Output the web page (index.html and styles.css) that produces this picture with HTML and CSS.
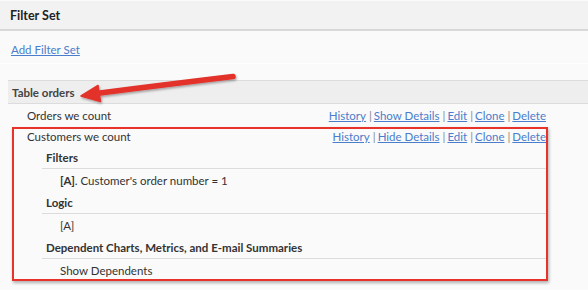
FILE: index.html
```html
<!DOCTYPE html>
<html>
<head>
<meta charset="utf-8">
<link rel="stylesheet" href="styles.css">
</head>
<body>
<div class="page">
  <div class="header">Filter Set</div>
  <div class="add"><a href="#">Add Filter Set</a></div>
  <div class="section">
    <div class="table-head">Table orders</div>
    <div class="row">
      <span class="name">Orders we count</span>
      <span class="links"><a href="#">History</a><i>|</i><a href="#">Show Details</a><i>|</i><a href="#">Edit</a><i>|</i><a href="#">Clone</a><i>|</i><a href="#">Delete</a></span>
    </div>
    <div class="row row2">
      <span class="name">Customers we count</span>
      <span class="links"><a href="#">History</a><i>|</i><a href="#">Hide Details</a><i>|</i><a href="#">Edit</a><i>|</i><a href="#">Clone</a><i>|</i><a href="#">Delete</a></span>
    </div>
    <div class="details">
      <div class="dh">Filters</div>
      <div class="di"><b>[A]</b>. Customer's order number = 1</div>
      <div class="dh">Logic</div>
      <div class="di">[A]</div>
      <div class="dh">Dependent Charts, Metrics, and E-mail Summaries</div>
      <div class="di">Show Dependents</div>
    </div>
  </div>
  <div class="redbox"></div>
  <svg class="arrow" width="588" height="290" viewBox="0 0 588 290">
    <defs>
      <filter id="sh" x="-10%" y="-50%" width="120%" height="200%">
        <feDropShadow dx="1" dy="1.5" stdDeviation="1" flood-color="#000" flood-opacity="0.35"/>
      </filter>
    </defs>
    <g filter="url(#sh)">
      <path d="M233 76.5 Q170 84 96 93.5" stroke="#e3312a" stroke-width="5.5" stroke-linecap="round" fill="none"/>
      <path d="M81 96 L98 85.5 L100.5 101.5 Z" fill="#e3312a" stroke="#e3312a" stroke-width="1.5" stroke-linejoin="round"/>
    </g>
  </svg>
</div>
</body>
</html>
```

FILE: styles.css
```css
* { box-sizing: border-box; }
html, body { margin: 0; padding: 0; }
body {
  background: #fafafa;
  font-family: "Lato", "Open Sans", sans-serif;
  font-size: 11.5px;
  color: #333;
  width: 588px;
  height: 290px;
  overflow: hidden;
}
.page { position: relative; width: 588px; height: 290px; }
a { color: #4a7dcb; text-decoration: underline; }
.header {
  height: 31px;
  background: #f2f2f2;
  border-top: 1px solid #fbfbfb;
  border-bottom: 2px solid #d8d8d8;
  padding-left: 10px;
  font-weight: bold;
  font-size: 12.5px;
  color: #222;
  display: flex;
  align-items: center;
}
.add {
  height: 33px;
  padding-left: 11px;
  display: flex;
  align-items: center;
  border-bottom: 1px solid #ffffff;
  padding-top: 4px;
}
.section { margin-left: 8px; margin-top: 16px; }
.table-head {
  height: 24px;
  background: #eeeeee;
  border-top: 1px solid #dcdcdc;
  border-bottom: 1px solid #dcdcdc;
  padding-left: 4px;
  font-weight: bold;
  color: #444;
  display: flex;
  align-items: center;
}
.row {
  height: 22px;
  display: flex;
  align-items: center;
  justify-content: space-between;
  padding-left: 19px;
  padding-right: 42px;
}
.row2 { height: 21px; }
.links i { font-style: normal; color: #888; margin: 0 2px 0 3px; }
.details { margin-left: 34px; margin-right: 42px; }
.dh {
  height: 22px;
  font-weight: bold;
  padding-left: 4px;
  border-bottom: 1px solid #dcdcdc;
  display: flex;
  align-items: center;
}
.di {
  height: 23px;
  padding-left: 18px;
  display: flex;
  align-items: center;
  white-space: pre;
}
.redbox {
  position: absolute;
  left: 12px;
  top: 127px;
  width: 536px;
  height: 154px;
  border: 2.5px solid #e8332b;
  box-shadow: 1px 2px 3px rgba(0,0,0,0.3);
}
.arrow { position: absolute; left: 0; top: 0; pointer-events: none; }
```
